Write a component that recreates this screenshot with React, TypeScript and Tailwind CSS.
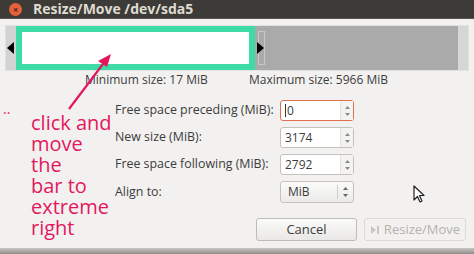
import React from "react";

function Arrows({ color }: { color: string }) {
  return (
    <svg width="7" height="12" viewBox="0 0 7 12">
      <path d="M3.5 1 L6 4 L1 4 Z" fill={color} />
      <path d="M3.5 11 L6 8 L1 8 Z" fill={color} />
    </svg>
  );
}

function Spin({ value, focused }: { value: string; focused?: boolean }) {
  return (
    <div
      className={
        "flex h-[21px] w-[74px] rounded-[3px] border bg-white " +
        (focused ? "border-[#e0704f]" : "border-[#c4c2be]")
      }
    >
      <div className="flex flex-1 items-center pl-[4px] text-[12px] text-[#3c3c3c]">
        {focused && <span className="mr-[1px] h-[13px] w-[1px] bg-[#333]" />}
        {value}
      </div>
      <div className="flex w-[13px] items-center justify-center border-l border-[#e4e2de] bg-[#f4f3f1]">
        <Arrows color="#8a8a8a" />
      </div>
    </div>
  );
}

export default function App() {
  return (
    <div
      className="relative flex h-[254px] w-[474px] flex-col overflow-hidden bg-[#f2f1f0]"
      style={{ fontFamily: '"Open Sans", "DejaVu Sans", sans-serif' }}
    >
      {/* title bar */}
      <div className="flex h-[19px] items-center bg-[#3c3b37] border-b border-[#56544f]">
        <div className="ml-[9px] flex h-[13px] w-[13px] items-center justify-center rounded-full bg-[#e8603a] text-[9px] font-bold leading-none text-[#3c2a20]">
          ×
        </div>
        <div className="ml-[11px] text-[14px] font-bold leading-none text-[#dfdbd2]">
          Resize/Move /dev/sda5
        </div>
      </div>

      {/* bar */}
      <div className="relative mx-[5px] mt-[6px] flex h-[46px] border border-[#e2e1df]">
        <div className="relative w-[10px] bg-[#d3d3d3]" />
        <div className="w-[239px] border-[6px] border-[#3ddba6] bg-white" />
        <div className="relative flex-1 bg-[#aaaaaa]">
          <div className="absolute left-[3px] top-[5px] h-[34px] w-[7px] border border-[#c8c8c8]" />
        </div>
        <div className="w-[10px] bg-[#d6d6d6]" />
        <div className="absolute left-[1px] top-[16px] h-0 w-0 border-y-[6px] border-r-[7px] border-y-transparent border-r-black" />
        <div className="absolute left-[251px] top-[16px] h-0 w-0 border-y-[6px] border-l-[7px] border-y-transparent border-l-black" />
      </div>

      {/* sizes */}
      <div className="flex h-[17px] items-center text-[12px] text-[#3c3c3c]">
        <span className="ml-[85px] w-[164px]">Minimum size: 17 MiB</span>
        <span>Maximum size: 5966 MiB</span>
      </div>

      {/* main */}
      <div className="relative flex flex-1">
        <div className="relative w-[115px]">
          <div className="absolute left-[3px] top-[14px] text-[14px] leading-none text-[#e0245e]">..</div>
          <div className="pl-[31px] pt-[24px] text-[20px] leading-[21px] text-[#e3175e]">
            click and
            <br />
            move
            <br />
            the
            <br />
            bar to
            <br />
            extreme
            <br />
            right
          </div>
        </div>
        <div className="flex flex-1 flex-col pt-[12px]">
          <div className="flex flex-col gap-[6px] text-[12.4px] text-[#3c3c3c]">
            <div className="flex items-center">
              <span className="w-[165px]">Free space preceding (MiB):</span>
              <Spin value="0" focused />
            </div>
            <div className="flex items-center">
              <span className="w-[165px]">New size (MiB):</span>
              <Spin value="3174" />
            </div>
            <div className="flex items-center">
              <span className="w-[165px]">Free space following (MiB):</span>
              <Spin value="2792" />
            </div>
            <div className="flex items-center">
              <span className="w-[165px]">Align to:</span>
              <div className="flex h-[22px] w-[74px] items-center rounded-[3px] border border-[#c4c2be] bg-gradient-to-b from-[#fbfbfa] to-[#ebeae8]">
                <span className="flex-1 pl-[7px] text-[12px] text-[#3c3c3c]">MiB</span>
                <div className="h-[14px] w-[1px] bg-[#d0cec9]" />
                <div className="flex w-[15px] items-center justify-center">
                  <Arrows color="#666" />
                </div>
              </div>
            </div>
          </div>
          <div className="mt-[15px] flex justify-end gap-[7px] pr-[8px]">
            <div className="flex h-[23px] w-[101px] items-center justify-center rounded-[3px] border border-[#bdbbb7] bg-gradient-to-b from-[#fbfbfa] to-[#e9e8e6] text-[13px] text-[#3c3c3c]">
              Cancel
            </div>
            <div className="flex h-[23px] w-[102px] items-center justify-center gap-[4px] rounded-[3px] border border-[#dcdad6] bg-[#f2f1f0] text-[13px] text-[#b4b2ae]">
              <svg width="10" height="10" viewBox="0 0 10 10">
                <path d="M1 1 L6 5 L1 9 Z" fill="#c8c6c2" />
                <rect x="7" y="1" width="2" height="8" fill="#c8c6c2" />
              </svg>
              Resize/Move
            </div>
          </div>
        </div>
      </div>

      {/* bottom strip */}
      <div className="h-[6px] bg-gradient-to-b from-[#c9c8c5] to-[#8e8d8a]" />

      {/* arrow annotation */}
      <svg className="absolute left-0 top-0" width="474" height="254" viewBox="0 0 474 254" style={{ pointerEvents: "none" }}>
        <line x1="69" y1="109" x2="106" y2="60" stroke="#e3175e" strokeWidth="2.2" />
        <path d="M111 54 L98 61 L107 67 Z" fill="#e3175e" />
      </svg>

      {/* mouse cursor */}
      <svg className="absolute left-[413px] top-[185px]" width="14" height="20" viewBox="0 0 14 20">
        <path d="M1 1 L1 15 L4.5 11.5 L7 17 L9 16 L6.5 10.5 L11 10.5 Z" fill="#fff" stroke="#222" strokeWidth="1.2" strokeLinejoin="round" />
      </svg>
    </div>
  );
}
